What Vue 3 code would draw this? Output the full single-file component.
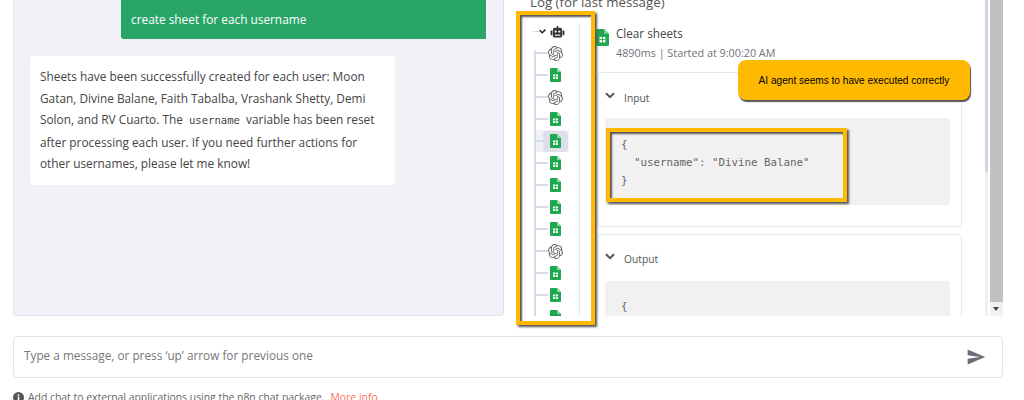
<script setup>
const openai = "M22.2819 9.8211a5.9847 5.9847 0 0 0-.5157-4.9108 6.0462 6.0462 0 0 0-6.5098-2.9A6.0651 6.0651 0 0 0 4.9807 4.1818a5.9847 5.9847 0 0 0-3.9977 2.9 6.0462 6.0462 0 0 0 .7427 7.0966 5.98 5.98 0 0 0 .511 4.9107 6.051 6.051 0 0 0 6.5146 2.9001A5.9847 5.9847 0 0 0 13.2599 24a6.0557 6.0557 0 0 0 5.7718-4.2058 5.9894 5.9894 0 0 0 3.9977-2.9001 6.0557 6.0557 0 0 0-.7475-7.0729zm-9.022 12.6081a4.4755 4.4755 0 0 1-2.8764-1.0408l.1419-.0804 4.7783-2.7582a.7948.7948 0 0 0 .3927-.6813v-6.7369l2.02 1.1686a.071.071 0 0 1 .038.052v5.5826a4.504 4.504 0 0 1-4.4945 4.4944zm-9.6607-4.1254a4.4708 4.4708 0 0 1-.5346-3.0137l.142.0852 4.783 2.7582a.7712.7712 0 0 0 .7806 0l5.8428-3.3685v2.3324a.0804.0804 0 0 1-.0332.0615L9.74 19.9502a4.4992 4.4992 0 0 1-6.1408-1.6464zM2.3408 7.8956a4.485 4.485 0 0 1 2.3655-1.9728V11.6a.7664.7664 0 0 0 .3879.6765l5.8144 3.3543-2.0201 1.1685a.0757.0757 0 0 1-.071 0l-4.8303-2.7865A4.504 4.504 0 0 1 2.3408 7.872zm16.5963 3.8558L13.1038 8.364 15.1192 7.2a.0757.0757 0 0 1 .071 0l4.8303 2.7913a4.4944 4.4944 0 0 1-.6765 8.1042v-5.6772a.79.79 0 0 0-.407-.667zm2.0107-3.0231l-.142-.0852-4.7735-2.7818a.7759.7759 0 0 0-.7854 0L9.409 9.2297V6.8974a.0662.0662 0 0 1 .0284-.0615l4.8303-2.7866a4.4992 4.4992 0 0 1 6.6802 4.66zM8.3065 12.863l-2.02-1.1638a.0804.0804 0 0 1-.038-.0567V6.0742a4.4992 4.4992 0 0 1 7.3757-3.4537l-.142.0805L8.704 5.459a.7948.7948 0 0 0-.3927.6813zm1.0976-2.3654l2.602-1.4998 2.6069 1.4998v2.9994l-2.5974 1.4997-2.6067-1.4997Z";

const nodes = ["ai","sheet","ai","sheet","sheet","sheet","sheet","sheet","sheet","ai","sheet","sheet","sheet"];
const selected = 4;
</script>

<template>
  <div class="page">
    <div class="main">
      <section class="chat">
        <div class="bubble-user">create sheet for each username</div>
        <div class="bubble-bot">
          Sheets have been successfully created for each user: Moon Gatan, Divine Balane, Faith Tabalba, Vrashank Shetty, Demi Solon, and RV Cuarto. The <code class="chip">username</code> variable has been reset after processing each user. If you need further actions for other usernames, please let me know!
        </div>
      </section>

      <section class="log">
        <div class="log-inner">
          <div class="log-title">Log (for last message)</div>
          <div class="log-body">
            <div class="tree">
              <div class="root">
                <span class="dash"></span>
                <svg class="caret" width="7" height="5" viewBox="0 0 7 5"><path d="M.6 1.2 3.2 3.8 6.4 .6" fill="none" stroke="#222" stroke-width="1.5"/></svg>
                <svg class="robot" width="15" height="12" viewBox="0 0 16 13">
                  <rect x="7.2" y="0" width="1.6" height="3" fill="#333"/>
                  <rect x="3" y="2" width="10" height="10.5" rx="2" fill="#333"/>
                  <rect x="0.5" y="5" width="2" height="5" rx=".7" fill="#333"/>
                  <rect x="13.5" y="5" width="2" height="5" rx=".7" fill="#333"/>
                  <circle cx="6" cy="6" r="1.2" fill="#fff"/>
                  <circle cx="10" cy="6" r="1.2" fill="#fff"/>
                  <rect x="5" y="9.3" width="6" height="1.2" fill="#fff"/>
                </svg>
              </div>
              <div v-for="(n, i) in nodes" :key="i" class="row" :class="{ selected: i === selected, first: i === 0 }">
                <span class="stem"></span>
                <span class="node">
                  <svg v-if="n === 'ai'" width="15" height="15" viewBox="0 0 24 24"><path :d="openai" fill="#666"/></svg>
                  <svg v-else width="11" height="14" viewBox="0 0 11 14">
                    <path d="M1 0H7L11 4V13a1 1 0 0 1-1 1H1a1 1 0 0 1-1-1V1a1 1 0 0 1 1-1z" fill="#1fa84f"/>
                    <path d="M7 0 11 4H7z" fill="#8ed6a6"/>
                    <path d="M3 6.5H8V11H3z" fill="#fff"/>
                    <path d="M3 8.7H8M5.5 6.5V11" stroke="#1fa84f" stroke-width=".7"/>
                  </svg>
                </span>
              </div>
            </div>

            <div class="detail">
              <header class="detail-head">
                <svg class="big-sheet" width="13" height="17" viewBox="0 0 11 14" preserveAspectRatio="none">
                  <path d="M1 0H7L11 4V13a1 1 0 0 1-1 1H1a1 1 0 0 1-1-1V1a1 1 0 0 1 1-1z" fill="#1fa84f"/>
                  <path d="M7 0 11 4H7z" fill="#8ed6a6"/>
                  <path d="M3 6.5H8V11H3z" fill="#fff"/>
                  <path d="M3 8.7H8M5.5 6.5V11" stroke="#1fa84f" stroke-width=".7"/>
                </svg>
                <div>
                  <div class="node-name">Clear sheets</div>
                  <div class="node-meta">4890ms | Started at 9:00:20 AM</div>
                </div>
              </header>

              <div class="card">
                <div class="card-head">
                  <svg width="10" height="7" viewBox="0 0 10 7"><path d="M1 1.2 5 5.2 9 1.2" fill="none" stroke="#555" stroke-width="2"/></svg>
                  <span>Input</span>
                </div>
                <pre class="code">{
  "username": "Divine Balane"
}</pre>
              </div>

              <div class="card second">
                <div class="card-head">
                  <svg width="10" height="7" viewBox="0 0 10 7"><path d="M1 1.2 5 5.2 9 1.2" fill="none" stroke="#555" stroke-width="2"/></svg>
                  <span>Output</span>
                </div>
                <pre class="code">{</pre>
              </div>
            </div>
          </div>
        </div>
        <div class="inner-track"><div class="inner-thumb"></div></div>
        <div class="scrollbar">
          <div class="thumb"></div>
          <div class="arrow"></div>
        </div>
      </section>
    </div>

    <div class="input">
      <span class="placeholder">Type a message, or press ‘up’ arrow for previous one</span>
      <svg width="20" height="20" viewBox="0 0 24 24"><path d="M2 21l21-9L2 3v7l15 2-15 2z" fill="#6b6e76"/></svg>
    </div>

    <div class="foot">
      <svg width="11" height="11" viewBox="0 0 11 11"><circle cx="5.5" cy="5.5" r="5.5" fill="#555"/><rect x="4.7" y="4.6" width="1.6" height="4.2" fill="#fff"/><rect x="4.7" y="2.3" width="1.6" height="1.5" fill="#fff"/></svg>
      <span>Add chat to external applications using the n8n chat package.</span>
      <a class="more">More info</a>
    </div>

    <div class="frame frame-tree"></div>
    <div class="frame frame-json"></div>
    <div class="callout">AI agent seems to have executed correctly</div>
  </div>
</template>

<style>
html, body { margin: 0; background: #fff; }
</style>

<style scoped>
.page {
  position: relative;
  width: 1024px;
  height: 400px;
  overflow: hidden;
  background: #fff;
  font-family: "Open Sans", "Noto Sans", sans-serif;
  color: #444;
}
.main {
  display: flex;
  height: 316px;
  margin: 0 21px 0 13px;
  overflow: hidden;
}
.chat {
  box-sizing: border-box;
  width: 491px;
  flex: none;
  padding: 0 16px;
  background: #f0f2f8;
  border: 1px solid #dfe3ee;
  border-top: 0;
  border-radius: 0 0 4px 4px;
}
.bubble-user {
  box-sizing: border-box;
  width: 365px;
  height: 39px;
  margin-left: 91px;
  padding: 9px 10px 0;
  background: #29a568;
  border-bottom-left-radius: 3px;
  color: #fff;
  font-size: 11.85px;
  line-height: 21px;
}
.bubble-bot {
  box-sizing: border-box;
  width: 365px;
  margin-top: 17px;
  padding: 10px;
  background: #fff;
  border-radius: 4px;
  font-size: 11.85px;
  line-height: 21.5px;
  color: #444;
}
.chip {
  font-family: "DejaVu Sans Mono", "Liberation Mono", monospace;
  font-size: 10.6px;
  padding: 0 3px;
}
.log {
  flex: 1;
  display: flex;
  min-width: 0;
}
.log-inner {
  width: 481px;
  flex: none;
  margin-top: -7px;
}
.log-title {
  margin-left: 26px;
  height: 18px;
  font-size: 13.3px;
  line-height: 18px;
  color: #555;
}
.log-body {
  display: flex;
}
.tree {
  box-sizing: border-box;
  width: 76px;
  flex: none;
  height: 320px;
  margin-top: 12px;
  border-right: 1px solid #e3e6f0;
}
.root {
  display: flex;
  align-items: center;
  height: 21px;
  margin-left: 29px;
  margin-top: -2px;
}
.dash {
  width: 6px;
  height: 1.5px;
  background: #d6dbea;
}
.caret { margin-right: 4px; }
.robot { display: block; }
.row {
  position: relative;
  display: flex;
  align-items: center;
  height: 22px;
  margin-left: 30px;
  width: 35px;
}
.row::before {
  content: "";
  position: absolute;
  left: 0;
  top: 0;
  bottom: 0;
  width: 1.5px;
  background: #d6dbea;
}
.row.first::before { top: 8px; }
.stem {
  width: 14px;
  height: 1.5px;
  background: #d6dbea;
  flex: none;
}
.node {
  display: flex;
  align-items: center;
  justify-content: center;
  width: 25px;
  height: 21px;
  margin-left: -5px;
  border-radius: 4px;
}
.row.selected { background: #f0f2f8; }
.row.selected .node { background: #dde0ea; }
.detail {
  flex: 1;
  min-width: 0;
  padding-left: 17px;
}
.detail-head {
  display: flex;
  box-sizing: border-box;
  height: 61px;
  padding-top: 13px;
  margin-left: -1px;
}
.big-sheet { margin: 5px 7px 0 0; flex: none; }
.node-name {
  font-size: 11.7px;
  line-height: 18px;
  color: #444;
}
.node-meta {
  font-size: 10.8px;
  line-height: 16px;
  margin-top: 3px;
  color: #6f7278;
}
.card {
  box-sizing: border-box;
  width: 365px;
  height: 155px;
  padding: 0 11px 0 7px;
  background: #fff;
  border: 1px solid #e6e9f2;
  border-radius: 4px;
}
.card.second { margin-top: 7px; height: 200px; }
.card-head {
  display: flex;
  align-items: center;
  box-sizing: border-box;
  gap: 9px;
  height: 45px;
  padding-top: 4px;
  font-size: 10.3px;
  color: #555;
}
.card.second .card-head { height: 46px; padding-top: 2px; }
.card-head svg { margin-top: -5px; }
.code {
  box-sizing: border-box;
  margin: 0;
  height: 87px;
  padding: 18px 16px 0;
  background: #f1f1f1;
  border-radius: 3px;
  font-family: "DejaVu Sans Mono", "Liberation Mono", monospace;
  font-size: 10.8px;
  line-height: 18px;
  color: #666;
}
.card.second .code { height: 140px; padding-top: 17px; }
.inner-track {
  width: 3px;
  background: #eef0f6;
  flex: none;
}
.inner-thumb {
  height: 172px;
  background: #cdd5e6;
}
.scrollbar {
  display: flex;
  flex-direction: column;
  width: 13px;
  margin-left: 2px;
  flex: none;
  background: #f1f1f1;
}
.thumb {
  flex: 1;
  background: #c1c1c1;
}
.arrow {
  height: 14px;
  flex: none;
  position: relative;
}
.arrow::after {
  content: "";
  position: absolute;
  left: 3px;
  top: 5px;
  border-left: 3.5px solid transparent;
  border-right: 3.5px solid transparent;
  border-top: 4px solid #444;
}
.input {
  box-sizing: border-box;
  display: flex;
  align-items: center;
  justify-content: space-between;
  height: 42px;
  margin: 20px 21px 0 13px;
  padding: 0 16px 0 10px;
  border: 1px solid #dfe3ee;
  border-radius: 4px;
}
.placeholder {
  margin-top: -4px;
  font-size: 11.8px;
  color: #777;
}
.foot {
  display: flex;
  align-items: center;
  gap: 4px;
  margin: 11px 0 0 13px;
  font-size: 10.4px;
  line-height: 16px;
  color: #666;
  white-space: nowrap;
}
.more {
  margin-left: 2px;
  color: #ff6d5a;
}
.frame {
  position: absolute;
  box-sizing: border-box;
  border: 4px solid #ffb900;
  box-shadow: 2px 2px 2px #555, inset 2px 2px 2px #555;
}
.frame-tree {
  left: 516px;
  top: 11px;
  width: 79px;
  height: 314px;
}
.frame-json {
  left: 606px;
  top: 128px;
  width: 241px;
  height: 74px;
}
.callout {
  position: absolute;
  left: 738px;
  top: 60px;
  width: 232px;
  height: 40px;
  display: flex;
  align-items: center;
  justify-content: center;
  background: #ffb900;
  border-radius: 8px;
  box-shadow: 1px 2px 1px #555;
  font-family: "Liberation Sans", Arial, sans-serif;
  font-size: 10.1px;
  color: #000;
}
</style>
